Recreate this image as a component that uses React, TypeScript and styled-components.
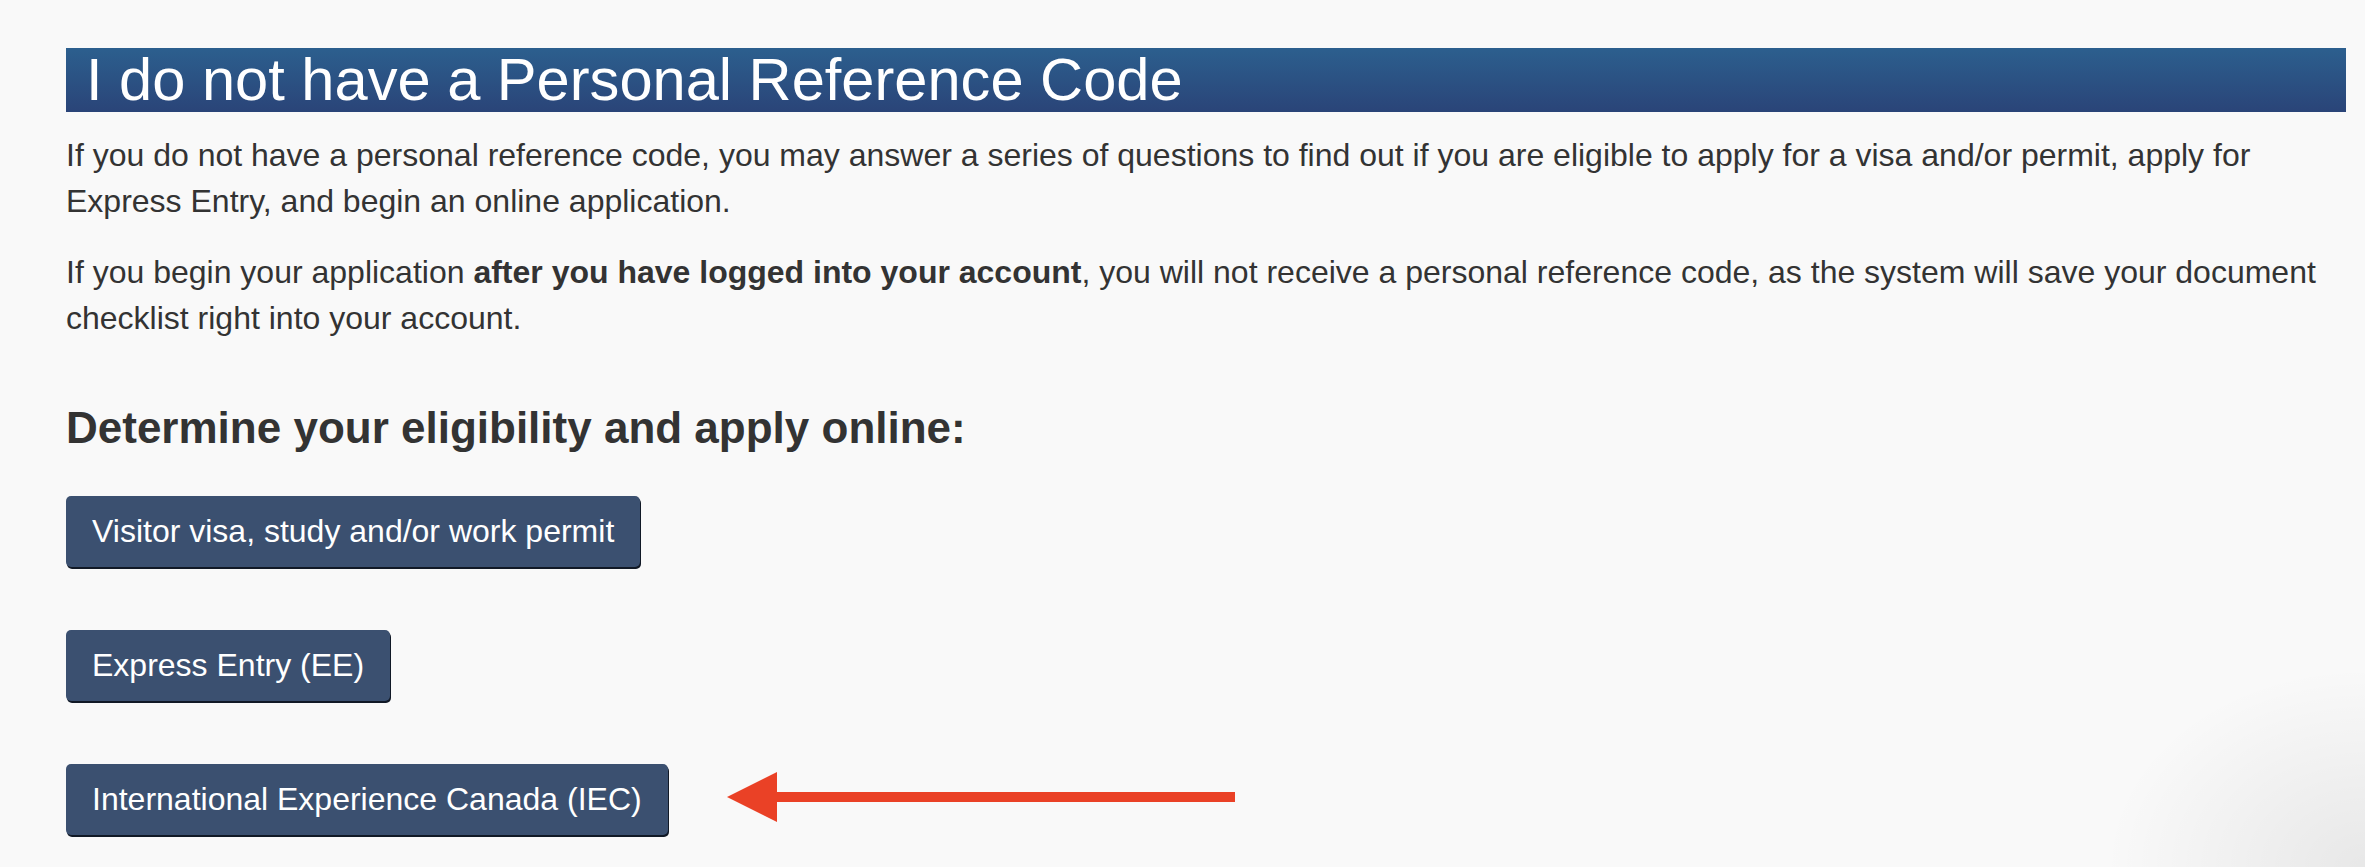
import styled, { createGlobalStyle } from "styled-components";

const GlobalStyle = createGlobalStyle`
  html, body {
    margin: 0;
    padding: 0;
  }
  body {
    min-height: 100vh;
    background-color: #f9f9f9;
    background-image: radial-gradient(
      ellipse 260px 200px at 100% 100%,
      rgba(0, 0, 0, 0.07),
      rgba(0, 0, 0, 0)
    );
    font-family: "Liberation Sans", Arial, Helvetica, sans-serif;
    color: #333333;
  }
`;

const Page = styled.div`
  padding: 48px 19px 30px 66px;
`;

const Banner = styled.h1`
  margin: 0;
  min-height: 64px;
  padding: 0 20px;
  background: linear-gradient(to bottom, #2c5f8e, #2a4478);
  color: #ffffff;
  font-size: 59.6px;
  font-weight: normal;
  line-height: 64px;
  white-space: nowrap;
`;

const Text = styled.p`
  margin: 0 0 25px;
  font-size: 32px;
  line-height: 46px;
  color: #333333;

  &:first-of-type {
    margin-top: 20px;
  }

  b {
    font-weight: bold;
  }
`;

const Subhead = styled.h2`
  margin: 61px 0 41px;
  font-size: 44px;
  font-weight: bold;
  line-height: 52.8px;
  color: #333333;
`;

const Actions = styled.div`
  display: flex;
  flex-direction: column;
  align-items: flex-start;
  gap: 63px;
`;

const Row = styled.div`
  display: flex;
  align-items: center;
`;

const Button = styled.button`
  display: inline-block;
  margin: 0;
  border: none;
  border-radius: 5px;
  padding: 11px 26px 12px;
  background-color: #3b5070;
  box-shadow: 1px 2px 0 #111926;
  color: #ffffff;
  font-family: "Liberation Sans", Arial, Helvetica, sans-serif;
  font-size: 32px;
  line-height: 48px;
  white-space: nowrap;
  cursor: pointer;
`;

const Pointer = styled.svg`
  flex: none;
  margin-left: 59px;
  margin-bottom: 4px;
`;

const Arrow = () => (
  <Pointer width="508" height="50" viewBox="0 0 508 50">
    <polygon points="0,25 50,0 50,50" fill="#ea4126" />
    <rect x="48" y="20" width="460" height="10" fill="#ea4126" />
  </Pointer>
);

const buttons = [
  "Visitor visa, study and/or work permit",
  "Express Entry (EE)",
  "International Experience Canada (IEC)",
];

export default function App() {
  return (
    <>
      <GlobalStyle />
      <Page>
        <Banner>I do not have a Personal Reference Code</Banner>
        <Text>
          If you do not have a personal reference code, you may answer a series
          of questions to find out if you are eligible to apply for a visa
          and/or permit, apply for Express Entry, and begin an online
          application.
        </Text>
        <Text>
          If you begin your application <b>after you have logged into your account</b>,
          you will not receive a personal reference code, as the system will
          save your document checklist right into your account.
        </Text>
        <Subhead>Determine your eligibility and apply online:</Subhead>
        <Actions>
          {buttons.map((label, i) => (
            <Row key={label}>
              <Button type="button">{label}</Button>
              {i === buttons.length - 1 && <Arrow />}
            </Row>
          ))}
        </Actions>
      </Page>
    </>
  );
}
